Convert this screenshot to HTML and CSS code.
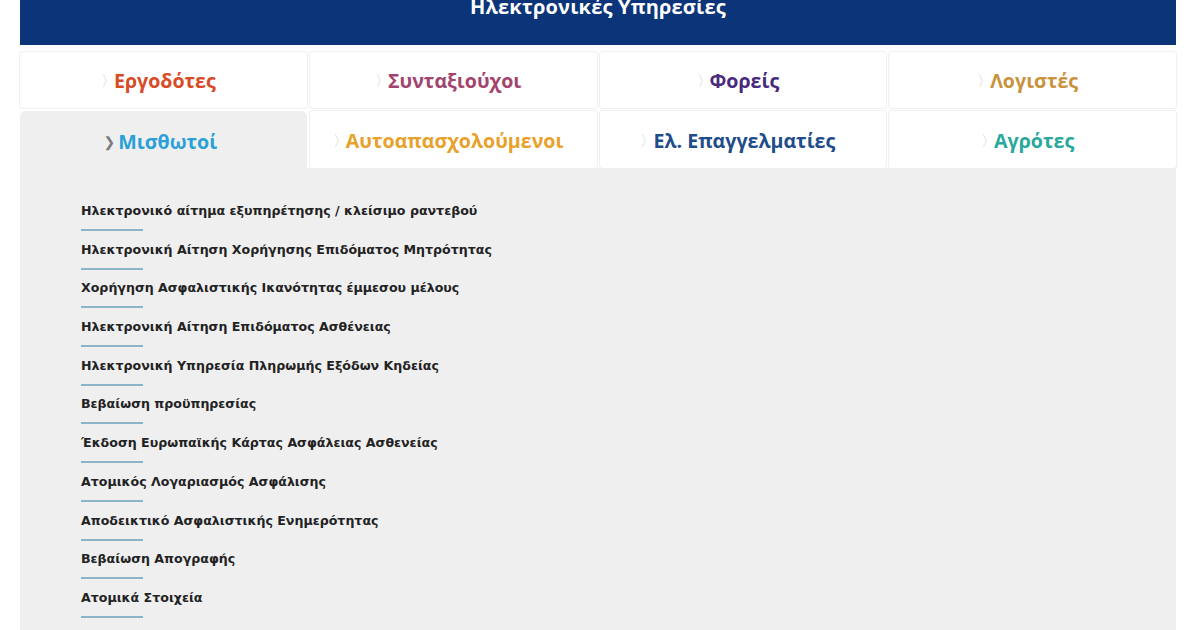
FILE: index.html
```html
<!DOCTYPE html>
<html lang="el">
<head>
<meta charset="utf-8">
<title>Ηλεκτρονικές Υπηρεσίες</title>
<link rel="stylesheet" href="styles.css">
</head>
<body>
<div class="wrap">
  <header class="banner"><h1 class="title">Ηλεκτρονικές Υπηρεσίες</h1></header>
  <nav class="tabs">
    <a class="tab c-erg"><span class="chev">〉</span>Εργοδότες</a>
    <a class="tab c-syn"><span class="chev">〉</span>Συνταξιούχοι</a>
    <a class="tab c-for"><span class="chev">〉</span>Φορείς</a>
    <a class="tab c-log"><span class="chev">〉</span>Λογιστές</a>
    <a class="tab tab-active c-mis"><span class="chev chev-active">❯</span>Μισθωτοί</a>
    <a class="tab c-aut"><span class="chev">〉</span>Αυτοαπασχολούμενοι</a>
    <a class="tab c-ele"><span class="chev">〉</span>Ελ. Επαγγελματίες</a>
    <a class="tab c-agr"><span class="chev">〉</span>Αγρότες</a>
  </nav>
  <section class="panel">
    <ul class="list">
      <li class="item">Ηλεκτρονικό αίτημα εξυπηρέτησης / κλείσιμο ραντεβού</li>
      <li class="item">Ηλεκτρονική Αίτηση Χορήγησης Επιδόματος Μητρότητας</li>
      <li class="item">Χορήγηση Ασφαλιστικής Ικανότητας έμμεσου μέλους</li>
      <li class="item">Ηλεκτρονική Αίτηση Επιδόματος Ασθένειας</li>
      <li class="item">Ηλεκτρονική Υπηρεσία Πληρωμής Εξόδων Κηδείας</li>
      <li class="item">Βεβαίωση προϋπηρεσίας</li>
      <li class="item">Έκδοση Ευρωπαϊκής Κάρτας Ασφάλειας Ασθενείας</li>
      <li class="item">Ατομικός Λογαριασμός Ασφάλισης</li>
      <li class="item">Αποδεικτικό Ασφαλιστικής Ενημερότητας</li>
      <li class="item">Βεβαίωση Απογραφής</li>
      <li class="item">Ατομικά Στοιχεία</li>
      <li class="item">Ηλεκτρονική Αίτηση Συνταξιοδότησης</li>
    </ul>
  </section>
</div>
</body>
</html>
```
FILE: styles.css
```css
html, body {
  margin: 0;
  padding: 0;
  background: #ffffff;
  overflow: hidden;
}
body {
  font-family: "Open Sans", "DejaVu Sans", sans-serif;
  height: 630px;
}
.wrap {
  width: 1156px;
  margin-left: 20px;
}
.banner {
  height: 45px;
  background: #0b3479;
  display: flex;
  justify-content: center;
  align-items: flex-start;
  overflow: hidden;
}
.title {
  margin: -6px 0 0 0;
  font-size: 20px;
  line-height: 26px;
  font-weight: 700;
  color: #ffffff;
  letter-spacing: 0.2px;
}
.tabs {
  display: grid;
  grid-template-columns: repeat(4, 1fr);
  grid-template-rows: 56px 57px;
  column-gap: 3px;
  row-gap: 3px;
  margin-top: 7px;
}
.tab {
  display: flex;
  align-items: center;
  justify-content: center;
  padding-top: 1px;
  background: #ffffff;
  box-shadow: 0 0 0 1px #f0f0f0;
  border-radius: 3px;
  font-size: 19.6px;
  font-weight: 700;
  text-decoration: none;
}
.tab-active {
  background: #efeff0;
  box-shadow: none;
  border-radius: 6px 6px 0 0;
  margin-bottom: -3px;
  padding-top: 0;
}
.chev {
  color: #d2d2d2;
  font-weight: 400;
  font-size: 15px;
  margin-right: -2px;
  margin-left: -10px;
}
.chev-active {
  color: #7a7a7a;
  font-size: 14px;
  margin-right: 3px;
  margin-left: -6px;
}
.c-erg { color: #d94a26; }
.c-syn { color: #a3446f; }
.c-for { color: #4a2a7c; }
.c-log { color: #c9923c; }
.c-mis { color: #2aa0d8; }
.c-aut { color: #e8a12a; }
.c-ele { color: #1e4d8a; }
.c-agr { color: #2aa89c; }
.panel {
  background: #efeff0;
  min-height: 470px;
  padding: 33px 0 0 61px;
}
.list {
  list-style: none;
  margin: 0;
  padding: 0;
  display: flex;
  flex-direction: column;
}
.item {
  font-family: "DejaVu Sans", sans-serif;
  font-size: 12.6px;
  font-weight: 700;
  color: #222222;
  line-height: 20px;
  height: 38.7px;
  position: relative;
}
.item::after {
  content: "";
  position: absolute;
  left: 0;
  top: 28px;
  width: 62px;
  height: 2px;
  background: #8db3c9;
}
```
